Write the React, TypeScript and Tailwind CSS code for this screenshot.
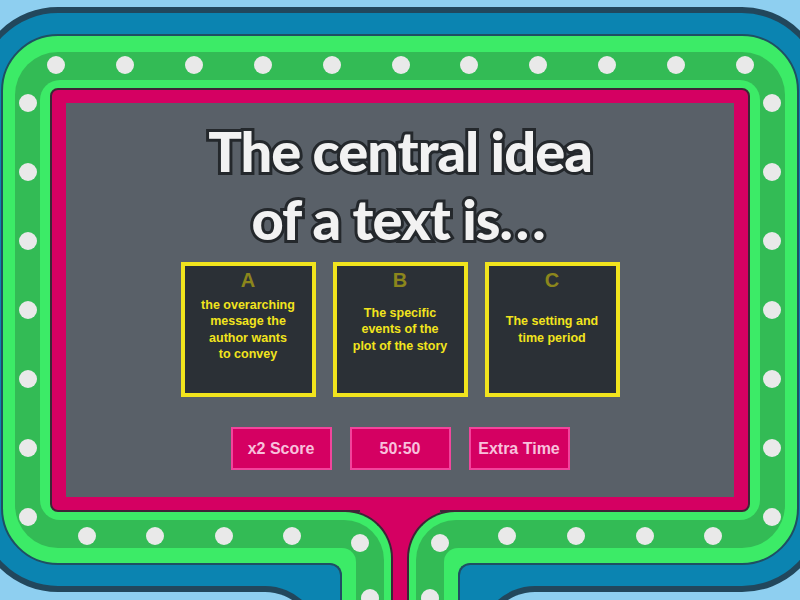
const topDots = Array.from({ length: 11 }, (_, i) => [56 + i * 68.9, 65]);
const sideDots = [103, 172, 241, 310, 379, 448, 517].flatMap((y) => [
  [28, y],
  [772, y],
]);
const bottomDots = [87, 155, 224, 292, 507, 576, 645, 713].map((x) => [x, 536]);
const legDots = [
  [360, 543],
  [440, 543],
  [370, 598],
  [430, 598],
];
const dots = [...topDots, ...sideDots, ...bottomDots, ...legDots];

const answers = [
  { letter: 'A', lines: ['the overarching', 'message the', 'author wants', 'to convey'] },
  { letter: 'B', lines: ['The specific', 'events of the', 'plot of the story'] },
  { letter: 'C', lines: ['The setting and', 'time period'] },
];

const powerUps = ['x2 Score', '50:50', 'Extra Time'];

function AnswerCard({ letter, lines }: { letter: string; lines: string[] }) {
  return (
    <div className="relative w-[135px] h-[135px] border-4 border-[#f2e41d] bg-[#2b3036] flex items-center justify-center">
      <div className="absolute top-[3px] left-0 right-0 text-center text-[20px] leading-[22px] font-bold text-[#8c861c]">
        {letter}
      </div>
      <p className="text-center text-[12.5px] leading-[16.5px] font-bold text-[#f2e41d]">
        {lines.map((l, i) => (
          <span key={i} className="block">
            {l}
          </span>
        ))}
      </p>
    </div>
  );
}

export default function App() {
  return (
    <div className="relative w-[800px] h-[600px] overflow-hidden bg-[#8ecff0] font-['Liberation_Sans',sans-serif]">
      {/* tv frame */}
      <div className="mt-[7px] ml-[-25px] w-[850px] h-[585px] rounded-[83px] border-[6px] border-[#22475c] bg-[#0b84b1] px-[20px] pt-[21px] pb-[21px] flex">
        <div className="flex-1 flex rounded-[57px] border-2 border-[#1f4f63] bg-[#3ceb67] pt-[16px] px-[12px] pb-[15px]">
          <div className="flex-1 flex rounded-[43px] bg-[#33bb55] py-[28px] px-[25px]">
            <div className="flex-1 flex rounded-[20px] bg-[#3ceb67] py-[8px] px-[10px]">
              <div className="flex-1 flex rounded-[8px] border-2 border-[#3d2536] bg-[#d50062] py-[13px] px-[14px]">
                <div className="flex-1 bg-[#596068] flex flex-col items-center pt-[14px]">
                  <h1 className="text-center text-[56px] leading-[68px] tracking-[-1px] font-black text-[#f2f2f2] font-['Lato',sans-serif] [-webkit-text-stroke:6px_#24282c] [paint-order:stroke_fill]">
                    The central idea
                    <br />
                    of a text is<span className="tracking-[3px]">...</span>
                  </h1>
                  <div className="mt-[9px] flex gap-[17px]">
                    {answers.map((a) => (
                      <AnswerCard key={a.letter} letter={a.letter} lines={a.lines} />
                    ))}
                  </div>
                  <div className="mt-[30px] flex gap-[18px]">
                    {powerUps.map((p) => (
                      <button
                        key={p}
                        className="w-[101px] h-[43px] bg-[#d50062] border-2 border-[#f2449c] text-[#f8c0dc] text-[16px] font-bold flex items-center justify-center"
                      >
                        {p}
                      </button>
                    ))}
                  </div>
                </div>
              </div>
            </div>
          </div>
        </div>
      </div>

      {/* stand under the screen */}
      <div className="absolute left-[215px] top-[586px] w-[106px] h-[60px] bg-[#0b84b1]">
        <div className="h-full rounded-tr-[56px] border-t-[6px] border-r-[6px] border-[#22475c] bg-[#8ecff0]" />
      </div>
      <div className="absolute left-[479px] top-[586px] w-[106px] h-[60px] bg-[#0b84b1]">
        <div className="h-full rounded-tl-[56px] border-t-[6px] border-l-[6px] border-[#22475c] bg-[#8ecff0]" />
      </div>
      <div className="absolute left-[321px] top-[580px] w-[158px] h-[30px] bg-[#0b84b1]" />
      <div className="absolute left-[360px] top-[505px] w-[80px] h-[100px] bg-[#d50062]" />
      <div className="absolute left-[321px] top-[510px] w-[72px] h-[100px] flex rounded-tr-[48px] border-t-2 border-r-2 border-[#3d2536] bg-[#3ceb67] pt-[8px] pr-[7px]">
        <div className="flex-1 flex rounded-tr-[40px] bg-[#33bb55] pt-[28px] pr-[28px]">
          <div className="flex-1 flex rounded-tr-[14px] bg-[#3ceb67] pt-[15px] pr-[14px]">
            <div className="flex-1 rounded-tr-[12px] border-t-2 border-r-2 border-[#1f4f63] bg-[#0b84b1]" />
          </div>
        </div>
      </div>
      <div className="absolute left-[407px] top-[510px] w-[72px] h-[100px] flex rounded-tl-[48px] border-t-2 border-l-2 border-[#3d2536] bg-[#3ceb67] pt-[8px] pl-[7px]">
        <div className="flex-1 flex rounded-tl-[40px] bg-[#33bb55] pt-[28px] pl-[28px]">
          <div className="flex-1 flex rounded-tl-[14px] bg-[#3ceb67] pt-[15px] pl-[14px]">
            <div className="flex-1 rounded-tl-[12px] border-t-2 border-l-2 border-[#1f4f63] bg-[#0b84b1]" />
          </div>
        </div>
      </div>

      {/* lights */}
      {dots.map(([x, y], i) => (
        <div
          key={i}
          className="absolute w-[18px] h-[18px] rounded-full bg-[#e9e9e9]"
          style={{ left: x - 9, top: y - 9 }}
        />
      ))}
    </div>
  );
}
